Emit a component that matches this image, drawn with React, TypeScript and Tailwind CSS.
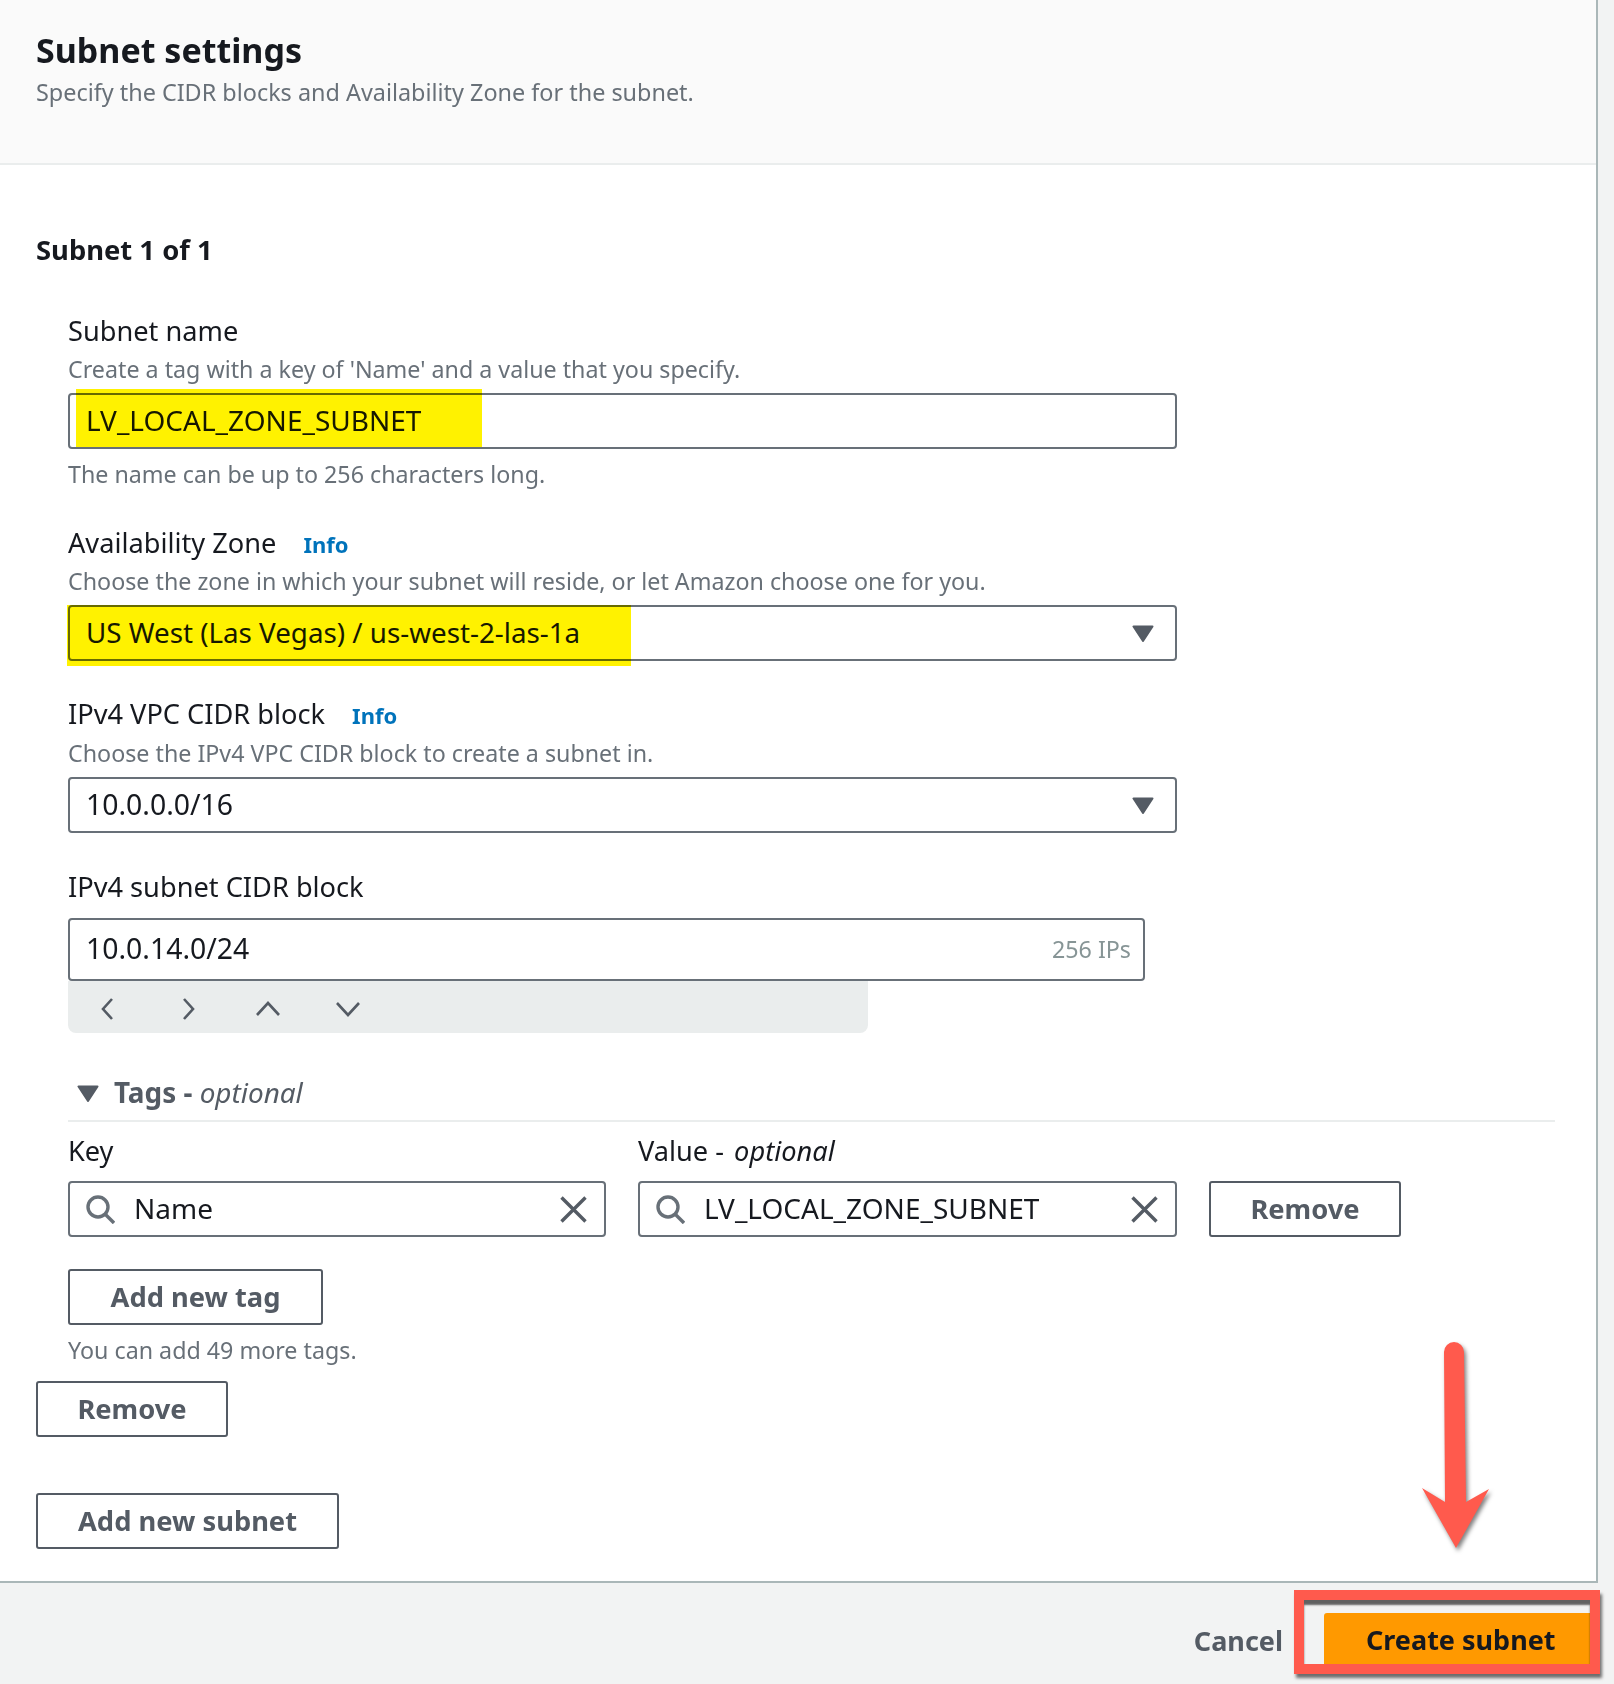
import type { ReactNode } from 'react'

const inputBox = 'border-2 border-[#687078] rounded-[4px] bg-white flex items-center'
const btn =
  'border-2 border-[#545b64] rounded-[3px] bg-white text-[#545b64] font-bold text-[27.3px] flex items-center justify-center h-[56px]'

function Label({ children, className = '' }: { children: ReactNode; className?: string }) {
  return <div className={`h-[32px] leading-[31px] text-[27.2px] text-[#16191f] whitespace-nowrap ${className}`}>{children}</div>
}

function Hint({ children, className = '' }: { children: ReactNode; className?: string }) {
  return <div className={`h-[32px] leading-[32px] text-[23.25px] text-[#687078] whitespace-nowrap ${className}`}>{children}</div>
}

function Info() {
  return <span className="ml-[27px] text-[22px] font-bold text-[#0073bb]">Info</span>
}

function CaretDown({ className = '' }: { className?: string }) {
  return (
    <svg viewBox="0 0 22 17" className={className}>
      <path d="M1.5 1.5h19L11 16z" fill="#545b64" stroke="#545b64" strokeWidth="2" strokeLinejoin="round" />
    </svg>
  )
}

function Chevron({ d, className }: { d: string; className: string }) {
  return (
    <svg viewBox="0 0 24 24" className={className} fill="none" stroke="#545b64" strokeWidth="2.6">
      <path d={d} />
    </svg>
  )
}

function SearchIcon() {
  return (
    <svg viewBox="0 0 29 29" className="w-[29px] h-[29px] shrink-0" fill="none" stroke="#687078" strokeWidth="3.4">
      <circle cx="12" cy="12" r="10" />
      <path d="M19 19l9 9" />
    </svg>
  )
}

function ClearIcon() {
  return (
    <svg viewBox="0 0 27 27" className="w-[27px] h-[27px] shrink-0" fill="none" stroke="#545b64" strokeWidth="3.4">
      <path d="M1.5 1.5l24 24M25.5 1.5l-24 24" />
    </svg>
  )
}

function TagInput({ value, className }: { value: string; className: string }) {
  return (
    <div className={`${inputBox} h-[56px] pl-[16px] pr-[17px] ${className}`}>
      <SearchIcon />
      <span className="ml-[19px] pb-[2px] flex-1 text-[28px] text-[#16191f] whitespace-nowrap">{value}</span>
      <ClearIcon />
    </div>
  )
}

function SelectBox({ children, className = '' }: { children: ReactNode; className?: string }) {
  return (
    <div className={`${inputBox} h-[56px] w-[1109px] pl-[16px] pr-[21px] justify-between text-[#16191f] ${className}`}>
      {children}
      <CaretDown className="w-[22px] h-[17px]" />
    </div>
  )
}

export default function App() {
  return (
    <div className="relative w-[1614px] h-[1684px] overflow-hidden bg-[#f2f3f3] font-['Noto_Sans',sans-serif]">
      <div className="w-[1598px] h-[1583px] bg-white border-r-2 border-b-2 border-[#aab7b8]">
        {/* Header */}
        <div className="h-[165px] bg-[#fafafa] border-b-2 border-[#eaeded] pl-[36px] pt-[28px]">
          <div className="leading-[44px] text-[34px] font-bold text-[#16191f]">Subnet settings</div>
          <div className="mt-[4px] leading-[32px] text-[23.4px] text-[#687078]">
            Specify the CIDR blocks and Availability Zone for the subnet.
          </div>
        </div>

        <div className="pl-[36px] pt-[69px]">
          <div className="h-[32px] leading-[32px] text-[27.4px] font-bold text-[#16191f]">Subnet 1 of 1</div>

          <div className="pl-[32px]">
            <Label className="mt-[49px]">Subnet name</Label>
            <Hint className="mt-[6px]">Create a tag with a key of 'Name' and a value that you specify.</Hint>
            <div className={`${inputBox} mt-[8px] h-[56px] w-[1109px] pl-[16px] text-[28px] text-[#16191f] relative`}>
              <span className="pb-[2px]">LV_LOCAL_ZONE_SUBNET</span>
              <div className="absolute left-[6px] -top-[6px] w-[406px] h-[58px] bg-[#fff200] mix-blend-multiply" />
            </div>
            <Hint className="mt-[9px]">The name can be up to 256 characters long.</Hint>

            <Label className="mt-[37px]">Availability Zone<Info /></Label>
            <Hint className="mt-[6px]">Choose the zone in which your subnet will reside, or let Amazon choose one for you.</Hint>
            <SelectBox className="mt-[8px] relative">
              <span className="text-[27.75px]">US West (Las Vegas) / us-west-2-las-1a</span>
              <div className="absolute -left-[3px] -top-[2px] w-[564px] h-[61px] bg-[#fff200] mix-blend-multiply" />
            </SelectBox>

            <Label className="mt-[37px]">IPv4 VPC CIDR block<Info /></Label>
            <Hint className="mt-[7px]">Choose the IPv4 VPC CIDR block to create a subnet in.</Hint>
            <SelectBox className="mt-[8px]">
              <span className="pb-[2px] text-[28.4px]">10.0.0.0/16</span>
            </SelectBox>

            <Label className="mt-[38px]">IPv4 subnet CIDR block</Label>
            <div className={`${inputBox} mt-[15px] h-[63px] w-[1077px] pl-[16px] pr-[12px] justify-between`}>
              <span className="pb-[2px] text-[28.4px] text-[#16191f]">10.0.14.0/24</span>
              <span className="text-[23.25px] text-[#879596]">256 IPs</span>
            </div>
            <div className="h-[52px] pt-[3px] w-[800px] bg-[#eaeded] rounded-b-[8px] flex items-center pl-[28px] gap-[56px]">
              <Chevron d="M16 2L7 12l9 10" className="w-[24px] h-[24px]" />
              <Chevron d="M8 2l9 10-9 10" className="w-[24px] h-[24px]" />
              <Chevron d="M1 18L12 6l11 12" className="w-[24px] h-[24px]" />
              <Chevron d="M1 6l11 12L23 6" className="w-[24px] h-[24px]" />
            </div>

            {/* Tags */}
            <div className="mt-[44px] h-[32px] w-[1487px] flex items-center pl-[9px]">
              <CaretDown className="w-[22px] h-[17px]" />
              <div className="ml-[15px] text-[27.9px] text-[#545b64] whitespace-nowrap">
                <span className="font-bold">Tags - </span>
                <i>optional</i>
              </div>
            </div>
            <div className="mt-[11px] h-[2px] w-[1487px] bg-[#eaeded]" />
            <div className="mt-[13px] flex">
              <Label className="w-[570px]">Key</Label>
              <Label>Value - <i className="ml-[3px]">optional</i></Label>
            </div>
            <div className="mt-[14px] flex">
              <TagInput value="Name" className="w-[538px]" />
              <TagInput value="LV_LOCAL_ZONE_SUBNET" className="ml-[32px] w-[539px]" />
              <div className={`${btn} ml-[32px] w-[192px]`}>Remove</div>
            </div>
            <div className={`${btn} mt-[32px] w-[255px]`}>Add new tag</div>
            <Hint className="mt-[9px]">You can add 49 more tags.</Hint>
          </div>

          <div className={`${btn} mt-[15px] w-[192px]`}>Remove</div>
          <div className={`${btn} mt-[56px] w-[303px]`}>Add new subnet</div>
        </div>
      </div>

      {/* Footer */}
      <div className="flex justify-end pt-[30px] pr-[20px]">
        <span className="mr-[41px] h-[55px] leading-[55px] text-[27px] font-bold text-[#545b64]">Cancel</span>
        <div className="w-[270px] h-[55px] bg-[#ff9900] rounded-[3px] text-[27px] font-bold text-[#16191f] flex items-center pl-[42px]">
          Create subnet
        </div>
      </div>

      {/* Annotations */}
      <div className="absolute left-[1294px] top-[1590px] w-[306px] h-[84px] border-[10px] border-[#ff5a4d] shadow-[2px_4px_3px_rgba(0,0,0,0.55),inset_0_5px_2px_rgba(0,0,0,0.6)]" />
      <svg className="absolute left-[1410px] top-[1335px] w-[95px] h-[225px] overflow-visible" viewBox="0 0 95 225">
        <path
          d="M34 17a10 10 0 0 1 20 0l2 150 23-13-33 59-34-60 23 14z"
          fill="#ff5a4d"
          className="drop-shadow-[2px_3px_2px_rgba(0,0,0,0.5)]"
        />
      </svg>
    </div>
  )
}
